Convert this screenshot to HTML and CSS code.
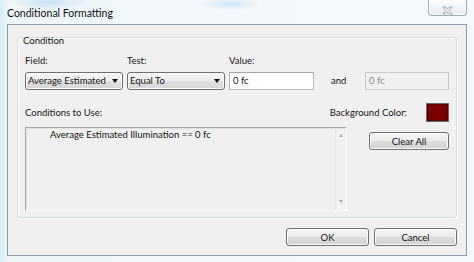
FILE: index.html
```html
<!DOCTYPE html>
<html lang="en">

<head>
    <meta charset="UTF-8">
    <title>Conditional Formatting</title>
    <link rel="stylesheet" href="styles.css">
</head>

<body>
    <div class="titlebar">
        <span class="title">Conditional Formatting</span>
        <button class="close-btn" type="button">
            <svg width="11" height="9" viewBox="0 0 11 9">
                <path d="M1 1h2.6L5.5 3.1 7.4 1H10L7.1 4.5 10 8H7.4L5.5 5.9 3.6 8H1L3.9 4.5Z" fill="#f6f8fa" stroke="#8f979f" stroke-width="0.8" />
            </svg>
        </button>
    </div>

    <div class="client">
        <div class="group">
            <div class="group-title">Condition</div>

            <div class="fields">
                <label>Field:</label>
                <label>Test:</label>
                <label>Value:</label>
                <span></span>
                <span></span>

                <div class="combo">Average Estimated</div>
                <div class="combo">Equal To</div>
                <div class="textbox">0 fc</div>
                <span class="and">and</span>
                <div class="textbox disabled">0 fc</div>
            </div>

            <div class="list-header">
                <span>Conditions to Use:</span>
                <div class="bg-color">
                    <span>Background Color:</span>
                    <span class="swatch"></span>
                </div>
            </div>

            <div class="list-row">
                <div class="listbox">
                    <div class="items">
                        <div class="item">Average Estimated Illumination == 0 fc</div>
                    </div>
                    <div class="scrollbar">
                        <span class="arrow-up"></span>
                        <span class="arrow-down"></span>
                    </div>
                </div>
                <button class="btn clear-btn" type="button">Clear All</button>
            </div>
        </div>

        <div class="actions">
            <button class="btn" type="button">OK</button>
            <button class="btn" type="button">Cancel</button>
        </div>
    </div>
</body>

</html>
```

FILE: styles.css
```css
* {
    box-sizing: border-box;
}

body {
    margin: 0;
    width: 474px;
    height: 262px;
    overflow: hidden;
    font-family: Lato, "Noto Sans", sans-serif;
    font-size: 9.5px;
    color: #161616;
    background:
        radial-gradient(ellipse 40px 8px at 50px 2px, rgba(170, 205, 235, 0.5), transparent),
        radial-gradient(ellipse 30px 6px at 230px 4px, rgba(170, 205, 235, 0.45), transparent),
        linear-gradient(to right, #d6eef4 0px, #eef6fa 8px, #f2f7fa 60%, #f5f8fa 100%);
}

.titlebar {
    display: flex;
    justify-content: space-between;
    height: 24px;
    padding-left: 7px;
}

.title {
    font-size: 10.5px;
    line-height: 12px;
    padding-top: 7px;
    color: #111;
}

.close-btn {
    width: 39px;
    height: 16px;
    margin-right: 7px;
    padding: 3px 0 0;
    border: 1px solid #a2aab2;
    border-top: none;
    border-radius: 0 0 4px 4px;
    background: linear-gradient(#f9fbfc, #e6ebef);
    box-shadow: inset 0 0 0 1px rgba(255, 255, 255, 0.8);
}

.client {
    margin-left: 7px;
    width: 460px;
    height: 232px;
    border: 1px solid #8e9aa4;
    background: #f0f0f0;
}

.group {
    margin: 12px 0 0 9px;
    width: 440px;
    height: 181px;
    padding: 0 7px;
    border: 1px solid #d5dce2;
    border-radius: 3px;
    box-shadow: inset 1px 1px 0 #fff, 1px 1px 0 #fff;
}

.group-title {
    margin: -3px 0 0 -2px;
    line-height: 12px;
}

.fields {
    display: grid;
    grid-template-columns: 98px 98px 85px 43px 84px;
    grid-template-rows: 12px 18px;
    column-gap: 4px;
    row-gap: 5px;
    margin-top: 8px;
    line-height: 12px;
}

.combo {
    position: relative;
    height: 18px;
    padding-left: 2px;
    line-height: 16px;
    border: 1px solid #707070;
    border-radius: 3px;
    background: linear-gradient(#f4f4f4 0%, #ececec 50%, #e0e0e0 50%, #d6d6d6 100%);
    box-shadow: inset 0 0 0 1px #fbfbfb;
}

.combo::after {
    content: "";
    position: absolute;
    right: 4px;
    top: 6px;
    border-left: 3.5px solid transparent;
    border-right: 3.5px solid transparent;
    border-top: 4px solid #111;
}

.textbox {
    height: 18px;
    padding-left: 3px;
    line-height: 16px;
    border: 1px solid #b5b8bd;
    border-top-color: #a3a6ab;
    background: #fff;
}

.textbox.disabled {
    background: #f0f0f0;
    border-color: #c9c9c9;
    color: #8d8d8d;
}

.and {
    padding-left: 13px;
    line-height: 18px;
}

.list-header {
    display: flex;
    justify-content: space-between;
    align-items: center;
    height: 19px;
    margin-top: 13px;
}

.bg-color {
    display: flex;
    align-items: center;
    gap: 19px;
}

.swatch {
    width: 23px;
    height: 19px;
    border: 1px solid #6b6b6b;
    background: #7d0000;
    box-shadow: inset 0 0 0 1px #5a0000;
}

.list-row {
    display: flex;
    justify-content: space-between;
    align-items: flex-start;
    margin-top: 5px;
}

.listbox {
    display: flex;
    width: 322px;
    height: 84px;
    border: 1px solid;
    border-color: #a8a8a8 #fff #fff #a8a8a8;
    box-shadow: inset 1px 1px 0 #e2e2e2;
    background: #f0f0f0;
}

.items {
    flex: 1;
    padding: 1px 0 0 24px;
    line-height: 12px;
}

.scrollbar {
    display: flex;
    flex-direction: column;
    justify-content: space-between;
    align-items: center;
    width: 11px;
    padding: 6px 0 7px;
    border-left: 1px solid #e6e6e6;
}

.arrow-up,
.arrow-down {
    border-left: 2.5px solid transparent;
    border-right: 2.5px solid transparent;
}

.arrow-up {
    border-bottom: 3px solid #ababab;
}

.arrow-down {
    border-top: 3px solid #ababab;
}

.btn {
    height: 18px;
    padding: 0;
    font-family: inherit;
    font-size: 9.5px;
    color: #161616;
    border: 1px solid #707070;
    border-radius: 3px;
    background: linear-gradient(#f4f4f4 0%, #ececec 50%, #dedede 50%, #d2d2d2 100%);
    box-shadow: inset 0 0 0 1px #fcfcfc;
}

.clear-btn {
    width: 80px;
    margin-top: 5px;
}

.actions {
    display: flex;
    justify-content: flex-end;
    gap: 5px;
    margin-top: 10px;
    padding-right: 9px;
}

.actions .btn {
    width: 83px;
}
```
